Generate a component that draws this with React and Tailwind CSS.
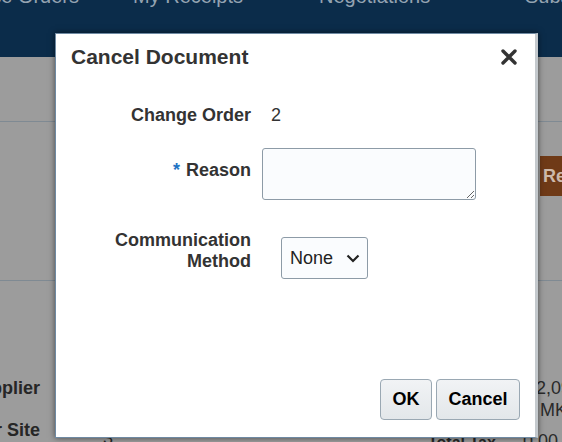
import React from "react";

const font = { fontFamily: '"Liberation Sans", Arial, sans-serif' };

function CloseIcon() {
  return (
    <svg width="16" height="16" viewBox="0 0 16 16">
      <path d="M2 2 L14 14 M14 2 L2 14" stroke="#333" strokeWidth="3.4" strokeLinecap="round" />
    </svg>
  );
}

function Chevron() {
  return (
    <svg width="14" height="9" viewBox="0 0 14 9">
      <path d="M1.5 1.5 L7 7 L12.5 1.5" fill="none" stroke="#222" strokeWidth="2.2" />
    </svg>
  );
}

export default function App() {
  return (
    <div className="relative w-[562px] h-[442px] overflow-hidden bg-[#9c9c9c]" style={font}>
      {/* background page */}
      <div className="h-[57px] bg-[#0b2c4a] overflow-hidden">
        <div className="flex -mt-[16px] text-[20px] leading-[24px] text-[#94a3b1] whitespace-nowrap">
          <div className="w-[79px] shrink-0 flex justify-end"><span>Purchase Orders</span></div>
          <div className="w-[54px] shrink-0"></div>
          <div className="w-[186px] shrink-0">My Receipts</div>
          <div className="w-[206px] shrink-0">Negotiations</div>
          <div className="shrink-0">Subscriptions</div>
        </div>
      </div>
      <div className="h-[65px] border-b border-[#7f8a93]"></div>
      <div className="h-[159px] border-b border-[#7f8a93] pt-[34px] pl-[540px]">
        <div className="w-[60px] h-[40px] bg-[#6f3a17] text-[#cdb9ab] font-bold text-[18px] leading-[40px] pl-[3px] whitespace-nowrap">Return</div>
      </div>
      <div className="flex text-[18px] whitespace-nowrap">
        <div className="w-[40px] shrink-0 flex flex-col items-end pt-[96px] font-bold text-[#262626] leading-[22px]">
          <div className="flex justify-end w-[40px]"><span>Supplier</span></div>
          <div className="flex justify-end w-[40px] mt-[20px]"><span>Supplier Site</span></div>
        </div>
        <div className="w-[63px] shrink-0"></div>
        <div className="w-[325px] shrink-0 pt-[146px] text-[#262626] leading-[22px]">3</div>
        <div className="w-[95px] shrink-0 pt-[151px] font-bold text-[16px] text-[#262626] leading-[22px]">Total Tax</div>
        <div className="flex flex-col shrink-0">
          <div className="pl-[13px] pt-[96px] leading-[22px] text-[#2a2a2a]">2,094.00</div>
          <div className="pl-[17px] leading-[22px] text-[#2a2a2a]">MKD</div>
          <div className="pt-[9px] leading-[22px] text-[#2a2a2a]">0.00</div>
        </div>
      </div>

      {/* dialog */}
      <div className="absolute left-[55px] top-[33px] w-[483px] h-[405px] bg-white border border-[#6f8aa3] border-r-[3px] border-r-[#c4c9cd] shadow-[0_0_6px_rgba(0,0,0,0.55)] flex flex-col text-[#333]">
        <div className="flex items-center justify-between pl-[15px] pr-[18px] pt-[11px]">
          <div className="text-[21px] font-bold leading-[24px]">Cancel Document</div>
          <CloseIcon />
        </div>

        <div className="flex mt-[34px] items-center">
          <div className="w-[195px] text-right font-bold text-[18px] leading-[24px]">Change Order</div>
          <div className="ml-[20px] text-[18px] leading-[24px]">2</div>
        </div>

        <div className="flex mt-[21px] items-start">
          <div className="w-[195px] text-right font-bold text-[18px] leading-[24px] mt-[10px]">
            <span className="text-[#1e73c4] mr-[6px]">*</span>Reason
          </div>
          <textarea className="ml-[11px] w-[214px] h-[52px] border border-[#8d9ba7] rounded-[3px] bg-[#fafcfe] outline-none text-[16px]" />
        </div>

        <div className="flex mt-[30px] items-start">
          <div className="w-[195px] text-right font-bold text-[18px] leading-[21px]">
            <div>Communication</div>
            <div>Method</div>
          </div>
          <div className="ml-[30px] mt-[7px] relative w-[87px] h-[42px]">
            <select className="appearance-none w-[87px] h-[42px] border border-[#8d9ba7] rounded-[3px] bg-[#fafcfe] pl-[8px] text-[18px] text-[#222] outline-none" style={font} defaultValue="None">
              <option>None</option>
            </select>
            <div className="absolute right-[8px] top-[17px] pointer-events-none">
              <Chevron />
            </div>
          </div>
        </div>

        <div className="mt-auto flex justify-end gap-[4px] pr-[15px] pb-[17px]">
          <button className="w-[52px] h-[41px] rounded-[4px] border border-[#9aa8b3] bg-gradient-to-b from-[#f1f3f5] to-[#e3e7ea] font-bold text-[18px] text-black" style={font}>OK</button>
          <button className="w-[84px] h-[41px] rounded-[4px] border border-[#9aa8b3] bg-gradient-to-b from-[#f1f3f5] to-[#e3e7ea] font-bold text-[18px] text-black" style={font}>Cancel</button>
        </div>
      </div>
    </div>
  );
}
